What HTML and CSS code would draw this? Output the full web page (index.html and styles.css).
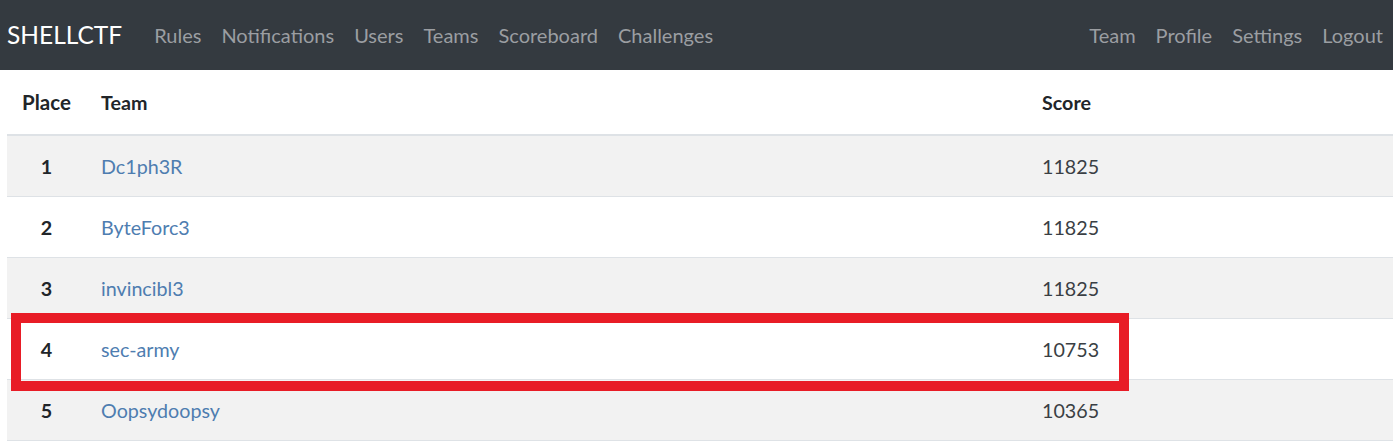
FILE: index.html
```html
<!DOCTYPE html>
<html>
<head>
<meta charset="utf-8">
<link rel="stylesheet" href="styles.css">
</head>
<body>
<nav class="navbar">
  <a class="brand" href="#">SHELLCTF</a>
  <ul class="nav nav-left">
    <li><a href="#">Rules</a></li>
    <li><a href="#">Notifications</a></li>
    <li><a href="#">Users</a></li>
    <li><a href="#">Teams</a></li>
    <li><a href="#">Scoreboard</a></li>
    <li><a href="#">Challenges</a></li>
  </ul>
  <ul class="nav nav-right">
    <li><a href="#">Team</a></li>
    <li><a href="#">Profile</a></li>
    <li><a href="#">Settings</a></li>
    <li><a href="#">Logout</a></li>
  </ul>
</nav>
<main class="content">
  <table class="board">
    <thead>
      <tr><th class="place">Place</th><th class="team">Team</th><th class="score">Score</th></tr>
    </thead>
    <tbody>
      <tr class="odd"><td class="place">1</td><td class="team"><a href="#">Dc1ph3R</a></td><td class="score">11825</td></tr>
      <tr><td class="place">2</td><td class="team"><a href="#">ByteForc3</a></td><td class="score">11825</td></tr>
      <tr class="odd"><td class="place">3</td><td class="team"><a href="#">invincibl3</a></td><td class="score">11825</td></tr>
      <tr class="marked"><td class="place">4</td><td class="team"><a href="#">sec-army</a></td><td class="score">10753</td></tr>
      <tr class="odd"><td class="place">5</td><td class="team"><a href="#">Oopsydoopsy</a></td><td class="score">10365</td></tr>
    </tbody>
  </table>
  <div class="highlight"></div>
</main>
</body>
</html>
```
FILE: styles.css
```css
html, body {
  margin: 0;
  padding: 0;
  background: #fff;
  font-family: Lato, "Noto Sans", sans-serif;
  color: #212529;
  overflow: hidden;
}
.navbar {
  display: flex;
  align-items: center;
  height: 70px;
  width: 1393px;
  background: #343a40;
  box-sizing: border-box;
  padding: 0 0 0 7px;
}
.brand {
  color: #fff;
  font-size: 24.5px;
  text-decoration: none;
  margin-right: 22px;
  line-height: 1;
}
.nav {
  display: flex;
  list-style: none;
  margin: 0;
  padding: 0;
}
.nav-right {
  margin-left: auto;
}
.nav li a {
  display: block;
  padding: 0 10px;
  font-size: 20px;
  color: #9b9ea2;
  text-decoration: none;
}
.content {
  position: relative;
  padding: 0 2px 0 7px;
  width: 1386px;
}
.board {
  width: 1386px;
  border-collapse: collapse;
  font-size: 19.7px;
}
.board th {
  height: 64px;
  font-weight: 700;
  text-align: left;
  border-bottom: 2px solid #dee2e6;
  padding: 0 15px;
  vertical-align: middle;
}
.board th.place { font-size: 20.5px; }
.board td {
  height: 60px;
  padding: 0 15px;
  border-top: 1px solid #dee2e6;
  vertical-align: middle;
}
.board tbody tr:first-child td {
  border-top: none;
}
.board tbody tr:last-child td {
  border-bottom: 1px solid #dee2e6;
}
.board .place {
  width: 49px;
  text-align: center;
  font-weight: 700;
}
.board .team { width: 911px; }
.board td.score { font-weight: 400; color: #3a3f44; }
.board tr.odd td { background: #f2f2f2; }
.board a {
  color: #4e7db0;
  text-decoration: none;
}
.highlight {
  position: absolute;
  left: 11px;
  top: 243px;
  width: 1098px;
  height: 58px;
  border: 10px solid #e81c26;
  pointer-events: none;
}
```
